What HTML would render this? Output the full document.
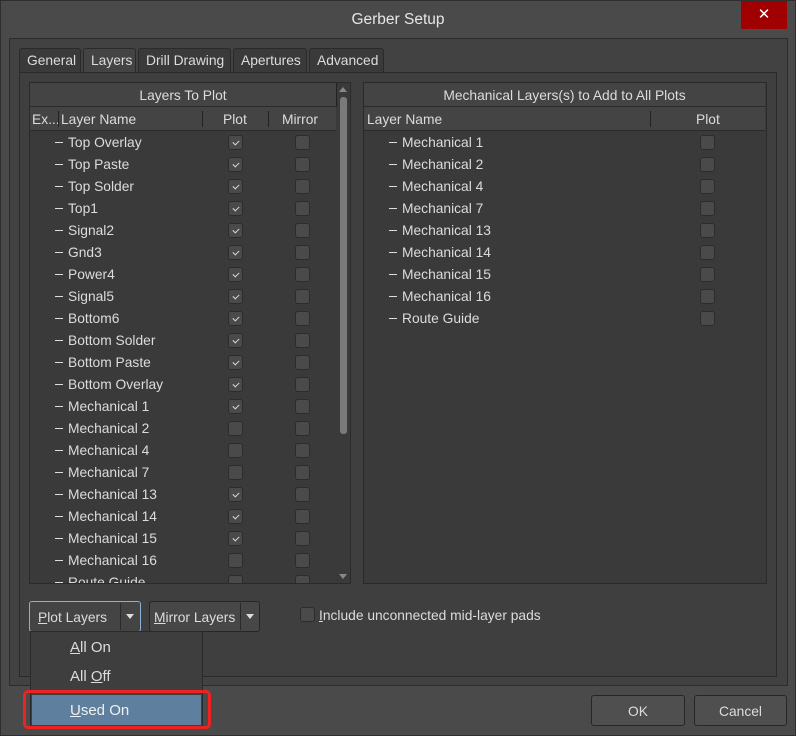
<!DOCTYPE html>
<html><head><meta charset="utf-8"><style>
*{box-sizing:border-box;margin:0;padding:0}
body{width:796px;height:736px;background:#4a4a4a;font-family:"Liberation Sans",sans-serif;font-size:13.8px;color:#dcdcdc;position:relative;overflow:hidden}
.a{position:absolute}
.cb{position:absolute;width:15px;height:15px;background:#4a4a4a;border:1px solid #2c2c2c;border-radius:3px}
.cb.on::after{content:"";position:absolute;left:4px;top:4px;width:5px;height:3px;border-left:1px solid #ddd;border-bottom:1px solid #ddd;transform:rotate(-45deg)}
.dash{position:absolute;width:8px;height:1px;background:#ddd}
.tab{position:absolute;top:48px;height:24px;background:#3a3a3a;border:1px solid #2a2a2a;border-bottom:none;border-radius:3px 3px 0 0;padding:4px 0 0 7px}
.btn{position:absolute;border:1px solid #262626;border-radius:3px;background:#4f4f4f;text-align:center}
u{text-decoration:underline}
</style></head><body>
<div class="a" style="left:0;top:0;width:796px;height:736px;border:1px solid #2e2e2e"></div>
<div class="a" style="left:0;top:11px;width:796px;text-align:center;font-size:15.5px;color:#e6e6e6">Gerber Setup</div>
<div class="a" style="left:741px;top:1px;width:46px;height:28px;background:#a00000;color:#fff;text-align:center;font-size:15px;line-height:28px">✕</div>
<div class="a" style="left:9px;top:38px;width:779px;height:648px;background:#424242;border:1px solid #2c2c2c"></div>
<div class="tab" style="left:19px;width:62px">General</div>
<div class="tab" style="left:83px;width:53px;background:#444;padding-left:7px">Layers</div>
<div class="tab" style="left:138px;width:93px">Drill Drawing</div>
<div class="tab" style="left:233px;width:74px">Apertures</div>
<div class="tab" style="left:309px;width:75px">Advanced</div>
<div class="a" style="left:19px;top:72px;width:758px;height:605px;background:#3f3f3f;border:1px solid #2a2a2a"></div>
<div class="a" style="left:29px;top:82px;width:322px;height:502px;background:#3a3a3a;border:1px solid #2a2a2a"></div>
<div class="a" style="left:30px;top:83px;width:306px;height:24px;background:#444;border-bottom:1px solid #2a2a2a;text-align:center;padding-top:5px">Layers To Plot</div>
<div class="a" style="left:30px;top:107px;width:306px;height:24px;background:#444;border-bottom:1px solid #2a2a2a"></div>
<div class="a" style="left:32px;top:112px">Ex...</div>
<div class="a" style="left:58px;top:111px;width:1px;height:16px;background:#222"></div>
<div class="a" style="left:61px;top:112px">Layer Name</div>
<div class="a" style="left:202px;top:111px;width:1px;height:16px;background:#222"></div>
<div class="a" style="left:223px;top:112px">Plot</div>
<div class="a" style="left:268px;top:111px;width:1px;height:16px;background:#222"></div>
<div class="a" style="left:282px;top:112px">Mirror</div>
<div class="a" style="left:336px;top:83px;width:1px;height:24px;background:#222"></div>
<div class="a" style="left:340px;top:97px;width:7px;height:337px;background:#7a7a7a;border-radius:3px"></div>
<div class="a" style="left:339px;top:87px;width:0;height:0;border:4px solid transparent;border-bottom:5px solid #888;border-top:none"></div>
<div class="a" style="left:339px;top:574px;width:0;height:0;border:4px solid transparent;border-top:5px solid #888;border-bottom:none"></div>
<div class="a" style="left:30px;top:132px;width:306px;height:451px;overflow:hidden" id="L"></div>
<div class="a" style="left:363px;top:82px;width:404px;height:502px;background:#3a3a3a;border:1px solid #2a2a2a"></div>
<div class="a" style="left:364px;top:83px;width:401px;height:24px;background:#444;border-bottom:1px solid #2a2a2a;text-align:center;padding-top:5px">Mechanical Layers(s) to Add to All Plots</div>
<div class="a" style="left:364px;top:107px;width:401px;height:24px;background:#444;border-bottom:1px solid #2a2a2a"></div>
<div class="a" style="left:367px;top:112px">Layer Name</div>
<div class="a" style="left:650px;top:111px;width:1px;height:16px;background:#222"></div>
<div class="a" style="left:696px;top:112px">Plot</div>
<div id="R"></div>
<div class="btn" style="left:29px;top:601px;width:112px;height:31px;border-color:#8ab0d8;background:#444;text-align:left;padding:8px 0 0 8px"><u>P</u>lot Layers</div>
<div class="a" style="left:120px;top:603px;width:1px;height:27px;background:#2a2a2a"></div>
<div class="a" style="left:126px;top:614px;border:4px solid transparent;border-top:5px solid #ddd;border-bottom:none;width:0;height:0"></div>
<div class="btn" style="left:149px;top:601px;width:111px;height:31px;background:#474747;text-align:left;padding:8px 0 0 4px"><u>M</u>irror Layers</div>
<div class="a" style="left:240px;top:603px;width:1px;height:27px;background:#2a2a2a"></div>
<div class="a" style="left:246px;top:614px;border:4px solid transparent;border-top:5px solid #ddd;border-bottom:none;width:0;height:0"></div>
<div class="cb" style="left:300px;top:607px"></div>
<div class="a" style="left:319px;top:608px"><u>I</u>nclude unconnected mid-layer pads</div>
<div class="a" style="left:30px;top:631px;width:173px;height:96px;background:#3e3e3e;border:1px solid #2a2a2a"></div>
<div class="a" style="left:70px;top:639px;font-size:15px"><u>A</u>ll On</div>
<div class="a" style="left:70px;top:668px;font-size:15px">All <u>O</u>ff</div>
<div class="a" style="left:32px;top:695px;width:169px;height:30px;background:#5f7f9f"></div>
<div class="a" style="left:70px;top:702px;font-size:15px;color:#f0f0f0"><u>U</u>sed On</div>
<div class="a" style="left:23px;top:690px;width:188px;height:39px;border:3px solid #ee2222;border-radius:5px"></div>
<div class="btn" style="left:591px;top:695px;width:94px;height:31px;padding-top:8px">OK</div>
<div class="btn" style="left:694px;top:695px;width:93px;height:31px;padding-top:8px">Cancel</div>
<script>
var l=[["Top Overlay",1],["Top Paste",1],["Top Solder",1],["Top1",1],["Signal2",1],["Gnd3",1],["Power4",1],["Signal5",1],["Bottom6",1],["Bottom Solder",1],["Bottom Paste",1],["Bottom Overlay",1],["Mechanical 1",1],["Mechanical 2",0],["Mechanical 4",0],["Mechanical 7",0],["Mechanical 13",1],["Mechanical 14",1],["Mechanical 15",1],["Mechanical 16",0],["Route Guide",0]];
var h="";l.forEach(function(r,i){var y=i*22;h+='<div class="dash" style="left:25px;top:'+(y+10)+'px"></div><div class="a" style="left:38px;top:'+(y+3)+'px">'+r[0]+'</div><div class="cb'+(r[1]?' on':'')+'" style="left:198px;top:'+(y+3)+'px"></div><div class="cb" style="left:265px;top:'+(y+3)+'px"></div>';});
document.getElementById("L").innerHTML=h;
var m=["Mechanical 1","Mechanical 2","Mechanical 4","Mechanical 7","Mechanical 13","Mechanical 14","Mechanical 15","Mechanical 16","Route Guide"];h="";
m.forEach(function(n,i){var y=132+i*22;h+='<div class="dash" style="left:389px;top:'+(y+10)+'px"></div><div class="a" style="left:402px;top:'+(y+3)+'px">'+n+'</div><div class="cb" style="left:700px;top:'+(y+3)+'px"></div>';});
document.getElementById("R").innerHTML=h;
</script>
</body></html>
